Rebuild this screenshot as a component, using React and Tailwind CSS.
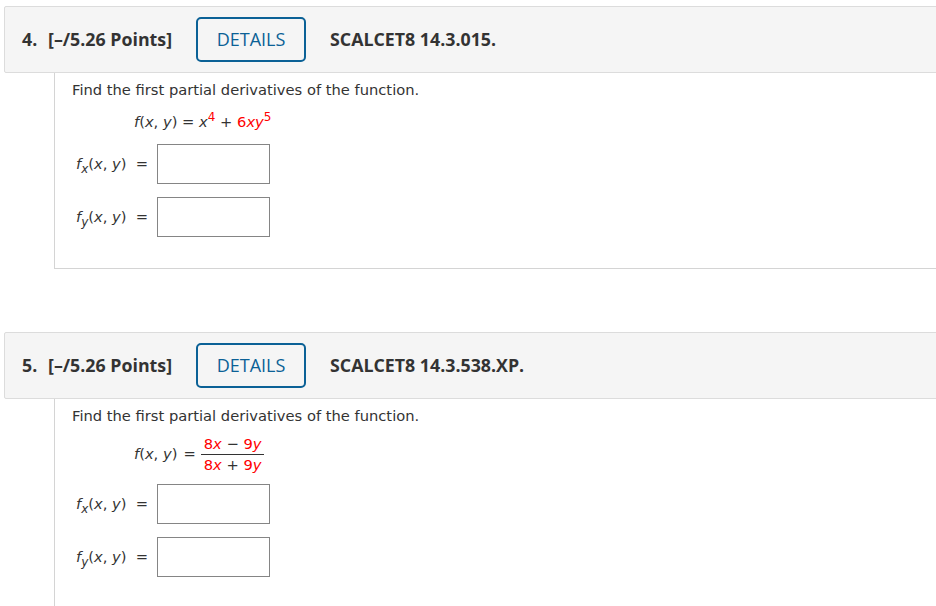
import React from "react";

const red = "text-[#ff0000]";

function Header({ num, code }) {
  return (
    <div className="ml-[4px] flex h-[67px] w-[1000px] items-center rounded-[2px] border border-[#dcdcdc] bg-[#f5f5f5] pl-[17px] font-['Open_Sans',sans-serif] text-[17.8px] font-bold text-[#333]">
      <span className="w-[26px]">{num}.</span>
      <span>[–/5.26 Points]</span>
      <button
        type="button"
        className="ml-[24px] h-[45px] w-[110px] rounded-[5px] border-2 border-[#0b6196] bg-white/0 text-[18px] font-medium text-[#0b6196]"
      >
        DETAILS
      </button>
      <span className="ml-[24px]">{code}</span>
    </div>
  );
}

function Fn({ name, sub }) {
  return (
    <span className="whitespace-nowrap">
      <i>{name}</i>
      {sub && (
        <span className="relative top-[4px] text-[12px] italic leading-none">{sub}</span>
      )}
      (<i>x</i>, <i>y</i>)
    </span>
  );
}

function AnswerRow({ sub, className }) {
  return (
    <div className={`flex items-center ${className}`}>
      <div className="flex w-[85px] items-center justify-between pl-[4px] pr-[9px]">
        <Fn name="f" sub={sub} />
        <span>=</span>
      </div>
      <div className="h-[40px] w-[113px] border border-[#858585] bg-white" />
    </div>
  );
}

function Body({ children, last }) {
  return (
    <div
      className={`ml-[54px] w-[1000px] border-l border-[#d4d4d4] pl-[17px] pt-[7px] font-['DejaVu_Sans',Verdana,sans-serif] text-[14.7px] text-[#333] ${
        last ? "pb-[40px]" : "border-b pb-[31px]"
      }`}
    >
      <p className="h-[20px] leading-[20px]">Find the first partial derivatives of the function.</p>
      {children}
    </div>
  );
}

export default function App() {
  return (
    <div className="h-[606px] w-[936px] overflow-hidden bg-white">
      <div className="pt-[6px]">
        <Header num={4} code="SCALCET8 14.3.015." />
        <Body>
          <div className="ml-[62px] mt-[12px] h-[20px] leading-[20px]">
            <Fn name="f" /> = <i>x</i>
            <sup className={`${red} text-[12px]`}>4</sup> +{" "}
            <span className={red}>
              6<i>xy</i>
              <sup className="text-[12px]">5</sup>
            </span>
          </div>
          <AnswerRow sub="x" className="mt-[12px]" />
          <AnswerRow sub="y" className="mt-[13px]" />
        </Body>

        <div className="h-[63px]" />

        <Header num={5} code="SCALCET8 14.3.538.XP." />
        <Body last>
          <div className="ml-[62px] mt-[9px] flex items-center">
            <Fn name="f" />
            <span className="ml-[6px]">=</span>
            <div className="ml-[5px] flex flex-col items-center leading-[18px]">
              <span className="px-[3px]">
                <span className={red}>
                  8<i>x</i>
                </span>{" "}
                −{" "}
                <span className={red}>
                  9<i>y</i>
                </span>
              </span>
              <span className="my-[1px] h-[1px] w-full bg-[#333]" />
              <span className="px-[3px]">
                <span className={red}>
                  8<i>x</i>
                </span>{" "}
                +{" "}
                <span className={red}>
                  9<i>y</i>
                </span>
              </span>
            </div>
          </div>
          <AnswerRow sub="x" className="mt-[10px]" />
          <AnswerRow sub="y" className="mt-[13px]" />
        </Body>
      </div>
    </div>
  );
}
